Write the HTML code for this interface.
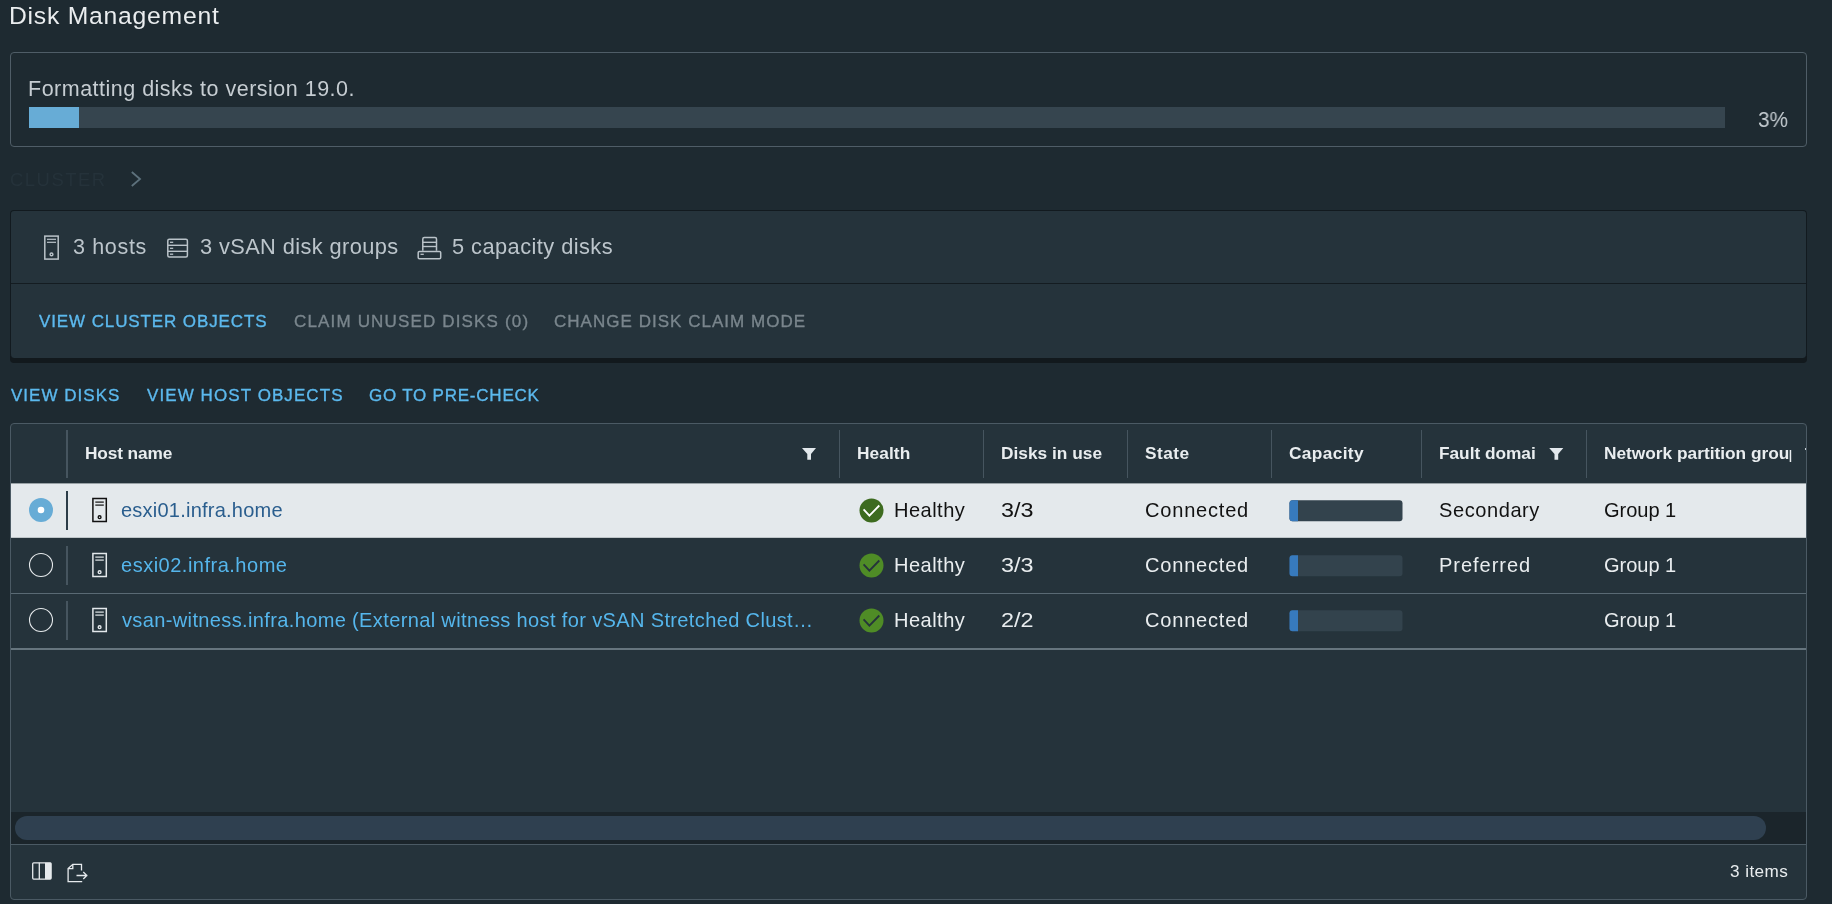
<!DOCTYPE html>
<html><head><meta charset="utf-8"><style>
html,body{margin:0;padding:0;width:1832px;height:904px;overflow:hidden;background:#1e2a31;}
body{position:relative;font-family:"Liberation Sans",sans-serif;}
.t{position:absolute;white-space:nowrap;will-change:transform;}
</style></head><body>
<div class="t" style="left:8.60px;top:3.50px;font-size:24.71px;line-height:24.71px;letter-spacing:0.767px;color:#eaedef;">Disk Management</div>
<div style="position:absolute;left:10px;top:52px;width:1797px;height:95px;box-sizing:border-box;border:1px solid #4f5d67;border-radius:4px;"></div>
<div class="t" style="left:27.60px;top:78.57px;font-size:21.51px;line-height:21.51px;letter-spacing:0.493px;color:#c6cdd2;">Formatting disks to version 19.0.</div>
<div style="position:absolute;left:29px;top:107px;width:1696px;height:21px;background:#36454f;"></div>
<div style="position:absolute;left:29px;top:107px;width:50px;height:21px;background:#67acd6;"></div>
<div class="t" style="left:1757.67px;top:109.58px;font-size:21.51px;line-height:21.51px;letter-spacing:0.000px;color:#c6cdd2;transform:scaleX(0.9614);transform-origin:0 0;">3%</div>
<div class="t" style="left:10.25px;top:170.92px;font-size:18.46px;line-height:18.46px;letter-spacing:1.519px;color:#25323a;">CLUSTER</div>
<svg style="position:absolute;left:0;top:0" width="1832" height="904"><polyline points="131.8,172 140,179 131.8,186" fill="none" stroke="#5d717c" stroke-width="1.8"/></svg>
<div style="position:absolute;left:10px;top:210px;width:1797px;height:148px;box-sizing:border-box;background:#25333b;border-top:1px solid #121a1f;border-left:1px solid #121a1f;border-right:1px solid #121a1f;border-radius:4px;box-shadow:0 5px 0 #12191d;"></div>
<div style="position:absolute;left:11px;top:283px;width:1795px;height:1px;background:#141c21;"></div>
<div class="t" style="left:72.59px;top:236.88px;font-size:21.51px;line-height:21.51px;letter-spacing:0.656px;color:#bcc5cb;">3 hosts</div>
<div class="t" style="left:199.56px;top:235.91px;font-size:21.8px;line-height:21.8px;letter-spacing:0.392px;color:#bcc5cb;">3 vSAN disk groups</div>
<div class="t" style="left:451.59px;top:235.91px;font-size:21.8px;line-height:21.8px;letter-spacing:0.450px;color:#bcc5cb;">5 capacity disks</div>
<svg style="position:absolute;left:0;top:0" width="1832" height="904" fill="none" stroke="#bac3c9">
<rect x="44.8" y="236.1" width="13.4" height="23" stroke-width="1.5"/>
<line x1="47" y1="239.3" x2="56" y2="239.3" stroke-width="1.2"/>
<line x1="47" y1="242.3" x2="56" y2="242.3" stroke-width="1.2"/>
<circle cx="51.5" cy="254.4" r="1.4" stroke-width="1.4"/>
<rect x="167.8" y="239.2" width="19.6" height="17.9" rx="1.5" stroke-width="1.5"/>
<line x1="167.8" y1="245.3" x2="187.4" y2="245.3" stroke-width="1.4"/>
<line x1="167.8" y1="251.3" x2="187.4" y2="251.3" stroke-width="1.4"/>
<line x1="170" y1="242.3" x2="173.2" y2="242.3" stroke-width="1.3"/>
<line x1="170" y1="248.3" x2="173.2" y2="248.3" stroke-width="1.3"/>
<line x1="170" y1="254.2" x2="173.2" y2="254.2" stroke-width="1.3"/>
<path d="M422.8,250.8 V239 a1.5,1.5 0 0 1 1.5,-1.5 H435 a1.5,1.5 0 0 1 1.5,1.5 V250.8" stroke-width="1.5"/>
<line x1="422.8" y1="242.3" x2="436.5" y2="242.3" stroke-width="1.4"/>
<line x1="422.8" y1="246.5" x2="436.5" y2="246.5" stroke-width="1.4"/>
<rect x="418.2" y="251.4" width="22.5" height="7.3" rx="1.2" stroke-width="1.5"/>
<line x1="420.5" y1="254.3" x2="423.8" y2="254.3" stroke-width="1.3"/>
</svg>
<div class="t" style="left:38.67px;top:312.67px;font-size:17.01px;line-height:17.01px;letter-spacing:0.895px;color:#5cb9ee;-webkit-text-stroke:0.35px">VIEW CLUSTER OBJECTS</div>
<div class="t" style="left:293.65px;top:312.66px;font-size:17.01px;line-height:17.01px;letter-spacing:1.161px;color:#7a868d;-webkit-text-stroke:0.35px">CLAIM UNUSED DISKS (0)</div>
<div class="t" style="left:553.80px;top:312.67px;font-size:17.01px;line-height:17.01px;letter-spacing:1.027px;color:#7a868d;-webkit-text-stroke:0.35px">CHANGE DISK CLAIM MODE</div>
<div class="t" style="left:10.53px;top:386.67px;font-size:17.01px;line-height:17.01px;letter-spacing:1.029px;color:#5cb9ee;-webkit-text-stroke:0.35px">VIEW DISKS</div>
<div class="t" style="left:146.73px;top:386.67px;font-size:17.01px;line-height:17.01px;letter-spacing:1.083px;color:#5cb9ee;-webkit-text-stroke:0.35px">VIEW HOST OBJECTS</div>
<div class="t" style="left:368.69px;top:386.67px;font-size:17.01px;line-height:17.01px;letter-spacing:0.781px;color:#5cb9ee;-webkit-text-stroke:0.35px">GO TO PRE-CHECK</div>
<div style="position:absolute;left:10px;top:423px;width:1797px;height:477px;box-sizing:border-box;background:#25333b;border:1px solid #4b5a64;border-radius:4px;"></div>
<div style="position:absolute;left:66px;top:430px;width:2px;height:48px;background:#46555f;"></div>
<div style="position:absolute;left:839px;top:430px;width:1px;height:48px;background:#46555f;"></div>
<div style="position:absolute;left:983px;top:430px;width:1px;height:48px;background:#46555f;"></div>
<div style="position:absolute;left:1127px;top:430px;width:1px;height:48px;background:#46555f;"></div>
<div style="position:absolute;left:1271px;top:430px;width:1px;height:48px;background:#46555f;"></div>
<div style="position:absolute;left:1421px;top:430px;width:1px;height:48px;background:#46555f;"></div>
<div style="position:absolute;left:1586px;top:430px;width:1px;height:48px;background:#46555f;"></div>
<div class="t" style="left:84.66px;top:444.90px;font-size:17.3px;line-height:17.3px;letter-spacing:-0.126px;color:#e9edef;font-weight:bold;">Host name</div>
<div class="t" style="left:856.53px;top:444.72px;font-size:17.3px;line-height:17.3px;letter-spacing:0.082px;color:#e9edef;font-weight:bold;">Health</div>
<div class="t" style="left:1000.60px;top:444.72px;font-size:17.3px;line-height:17.3px;letter-spacing:0.016px;color:#e9edef;font-weight:bold;">Disks in use</div>
<div class="t" style="left:1144.76px;top:444.53px;font-size:17.3px;line-height:17.3px;letter-spacing:0.440px;color:#e9edef;font-weight:bold;">State</div>
<div class="t" style="left:1288.82px;top:444.54px;font-size:17.3px;line-height:17.3px;letter-spacing:0.361px;color:#e9edef;font-weight:bold;">Capacity</div>
<div class="t" style="left:1439.07px;top:444.72px;font-size:17.3px;line-height:17.3px;letter-spacing:-0.024px;color:#e9edef;font-weight:bold;">Fault domai</div>
<div class="t" style="left:1603.80px;top:444.72px;font-size:17.3px;line-height:17.3px;letter-spacing:0.002px;color:#e9edef;font-weight:bold;">Network partition grou</div>
<svg style="position:absolute;left:0;top:0" width="1832" height="904"><path d="M802,448 H816 L811,453.9 V459.8 H807.3 V453.9 Z" fill="#e2e8ec"/><path d="M1549.2,448 H1563.3 L1558.2,453.9 V459.8 H1554.5 V453.9 Z" fill="#e2e8ec"/><rect x="1805" y="448" width="1" height="2" fill="#c8d0d5"/><rect x="1789.7" y="450" width="1.5" height="12" fill="#e9edef"/></svg>
<svg style="position:absolute;left:0;top:0" width="1832" height="904"><rect x="11" y="483.4" width="1795" height="54.4" fill="#e4e9ec"/></svg>
<div style="position:absolute;left:11px;top:593px;width:1795px;height:1px;background:#5a6a74;"></div>
<div style="position:absolute;left:11px;top:648px;width:1795px;height:2px;background:#66757e;"></div>
<div class="t" style="left:120.69px;top:499.72px;font-size:20.06px;line-height:20.06px;letter-spacing:0.207px;color:#2a5e8e;">esxi01.infra.home</div>
<div class="t" style="left:893.73px;top:499.74px;font-size:20.06px;line-height:20.06px;letter-spacing:0.471px;color:#121212;">Healthy</div>
<div class="t" style="left:1000.52px;top:499.99px;font-size:20.06px;line-height:20.06px;letter-spacing:0.000px;color:#121212;transform:scaleX(1.1653);transform-origin:0 0;">3/3</div>
<div class="t" style="left:1144.60px;top:499.67px;font-size:20.06px;line-height:20.06px;letter-spacing:0.787px;color:#121212;">Connected</div>
<div class="t" style="left:1438.64px;top:499.72px;font-size:20.06px;line-height:20.06px;letter-spacing:0.564px;color:#121212;">Secondary</div>
<div class="t" style="left:1603.96px;top:499.50px;font-size:20.06px;line-height:20.06px;letter-spacing:-0.045px;color:#121212;">Group 1</div>
<div class="t" style="left:120.69px;top:554.71px;font-size:20.06px;line-height:20.06px;letter-spacing:0.483px;color:#55b6ec;">esxi02.infra.home</div>
<div class="t" style="left:893.73px;top:554.74px;font-size:20.06px;line-height:20.06px;letter-spacing:0.471px;color:#e9edef;">Healthy</div>
<div class="t" style="left:1000.52px;top:554.99px;font-size:20.06px;line-height:20.06px;letter-spacing:0.000px;color:#e9edef;transform:scaleX(1.1653);transform-origin:0 0;">3/3</div>
<div class="t" style="left:1144.60px;top:554.67px;font-size:20.06px;line-height:20.06px;letter-spacing:0.787px;color:#e9edef;">Connected</div>
<div class="t" style="left:1438.67px;top:554.69px;font-size:20.06px;line-height:20.06px;letter-spacing:0.962px;color:#e9edef;">Preferred</div>
<div class="t" style="left:1603.96px;top:554.50px;font-size:20.06px;line-height:20.06px;letter-spacing:-0.045px;color:#e9edef;">Group 1</div>
<div class="t" style="left:121.74px;top:609.81px;font-size:20.06px;line-height:20.06px;letter-spacing:0.349px;color:#55b6ec;">vsan-witness.infra.home (External witness host for vSAN Stretched Clust…</div>
<div class="t" style="left:893.73px;top:609.74px;font-size:20.06px;line-height:20.06px;letter-spacing:0.471px;color:#e9edef;">Healthy</div>
<div class="t" style="left:1000.53px;top:609.96px;font-size:20.06px;line-height:20.06px;letter-spacing:0.000px;color:#e9edef;transform:scaleX(1.1653);transform-origin:0 0;">2/2</div>
<div class="t" style="left:1144.60px;top:609.67px;font-size:20.06px;line-height:20.06px;letter-spacing:0.787px;color:#e9edef;">Connected</div>
<div class="t" style="left:1603.96px;top:609.50px;font-size:20.06px;line-height:20.06px;letter-spacing:-0.045px;color:#e9edef;">Group 1</div>
<svg style="position:absolute;left:0;top:0" width="1832" height="904">
<rect x="66" y="491" width="2" height="39" fill="#2c3d48"/>
<circle cx="41" cy="510" r="12" fill="#67acd6"/><circle cx="41" cy="510" r="3.3" fill="#fff"/>
<rect x="92.9" y="498.5" width="13.4" height="23" fill="none" stroke="#111" stroke-width="1.5"/><line x1="95.3" y1="502.1" x2="103.8" y2="502.1" stroke="#111" stroke-width="1.2"/><line x1="95.3" y1="505.1" x2="103.8" y2="505.1" stroke="#111" stroke-width="1.2"/><circle cx="99.6" cy="517.2" r="1.4" fill="none" stroke="#111" stroke-width="1.4"/>
<circle cx="871.5" cy="510.6" r="12" fill="#3d6b1f"/><polyline points="863.6,509.4 869.4,515.7 879.3,505.5" fill="none" stroke="#fff" stroke-width="1.8"/>
<rect x="1289.5" y="500.2" width="113" height="21" rx="3" fill="#33434d"/><path d="M1292.5,500.2 H1298 V521.2 H1292.5 a3,3 0 0 1 -3,-3 V503.2 a3,3 0 0 1 3,-3 Z" fill="#377abd"/>
<rect x="66" y="546" width="2" height="39" fill="#46555f"/>
<circle cx="41" cy="565" r="11.5" fill="none" stroke="#e6eaec" stroke-width="1.1"/>
<rect x="92.9" y="553.5" width="13.4" height="23" fill="none" stroke="#e3e8eb" stroke-width="1.5"/><line x1="95.3" y1="557.1" x2="103.8" y2="557.1" stroke="#e3e8eb" stroke-width="1.2"/><line x1="95.3" y1="560.1" x2="103.8" y2="560.1" stroke="#e3e8eb" stroke-width="1.2"/><circle cx="99.6" cy="572.2" r="1.4" fill="none" stroke="#e3e8eb" stroke-width="1.4"/>
<circle cx="871.5" cy="565.6" r="12" fill="#4f8c26"/><polyline points="863.6,564.4 869.4,570.7 879.3,560.5" fill="none" stroke="#25333b" stroke-width="1.8"/>
<rect x="1289.5" y="555.2" width="113" height="21" rx="3" fill="#33434d"/><path d="M1292.5,555.2 H1298 V576.2 H1292.5 a3,3 0 0 1 -3,-3 V558.2 a3,3 0 0 1 3,-3 Z" fill="#377abd"/>
<rect x="66" y="601" width="2" height="39" fill="#46555f"/>
<circle cx="41" cy="620" r="11.5" fill="none" stroke="#e6eaec" stroke-width="1.1"/>
<rect x="92.9" y="608.5" width="13.4" height="23" fill="none" stroke="#e3e8eb" stroke-width="1.5"/><line x1="95.3" y1="612.1" x2="103.8" y2="612.1" stroke="#e3e8eb" stroke-width="1.2"/><line x1="95.3" y1="615.1" x2="103.8" y2="615.1" stroke="#e3e8eb" stroke-width="1.2"/><circle cx="99.6" cy="627.2" r="1.4" fill="none" stroke="#e3e8eb" stroke-width="1.4"/>
<circle cx="871.5" cy="620.6" r="12" fill="#4f8c26"/><polyline points="863.6,619.4 869.4,625.7 879.3,615.5" fill="none" stroke="#25333b" stroke-width="1.8"/>
<rect x="1289.5" y="610.2" width="113" height="21" rx="3" fill="#33434d"/><path d="M1292.5,610.2 H1298 V631.2 H1292.5 a3,3 0 0 1 -3,-3 V613.2 a3,3 0 0 1 3,-3 Z" fill="#377abd"/>
</svg>
<div style="position:absolute;left:11px;top:812px;width:1795px;height:32px;background:#1b252b;"></div>
<div style="position:absolute;left:15px;top:816px;width:1751px;height:24px;background:#2f4050;border-radius:12px;"></div>
<div style="position:absolute;left:11px;top:844px;width:1795px;height:1px;background:#4b5a64;"></div>
<div class="t" style="left:1729.64px;top:862.83px;font-size:17.15px;line-height:17.15px;letter-spacing:0.438px;color:#e9edef;">3 items</div>
<svg style="position:absolute;left:0;top:0" width="1832" height="904" fill="none" stroke="#e6eaed" stroke-width="1.3">
<rect x="32.7" y="862.8" width="18.4" height="16.3" rx="1"/>
<line x1="39.3" y1="862.8" x2="39.3" y2="879.1"/>
<rect x="45" y="862.8" width="6.1" height="16.3" fill="#e6eaed" stroke="none"/>
<path d="M81.5,870.5 V864.3 H72.8 L68.1,868.6 V881.6 H82.2"/>
<path d="M72.8,864.3 V868.6 H68.1"/>
<path d="M76.5,875.5 H87.3 M83.3,872 L86.8,875.5 L83.3,879"/>
</svg>
</body></html>
